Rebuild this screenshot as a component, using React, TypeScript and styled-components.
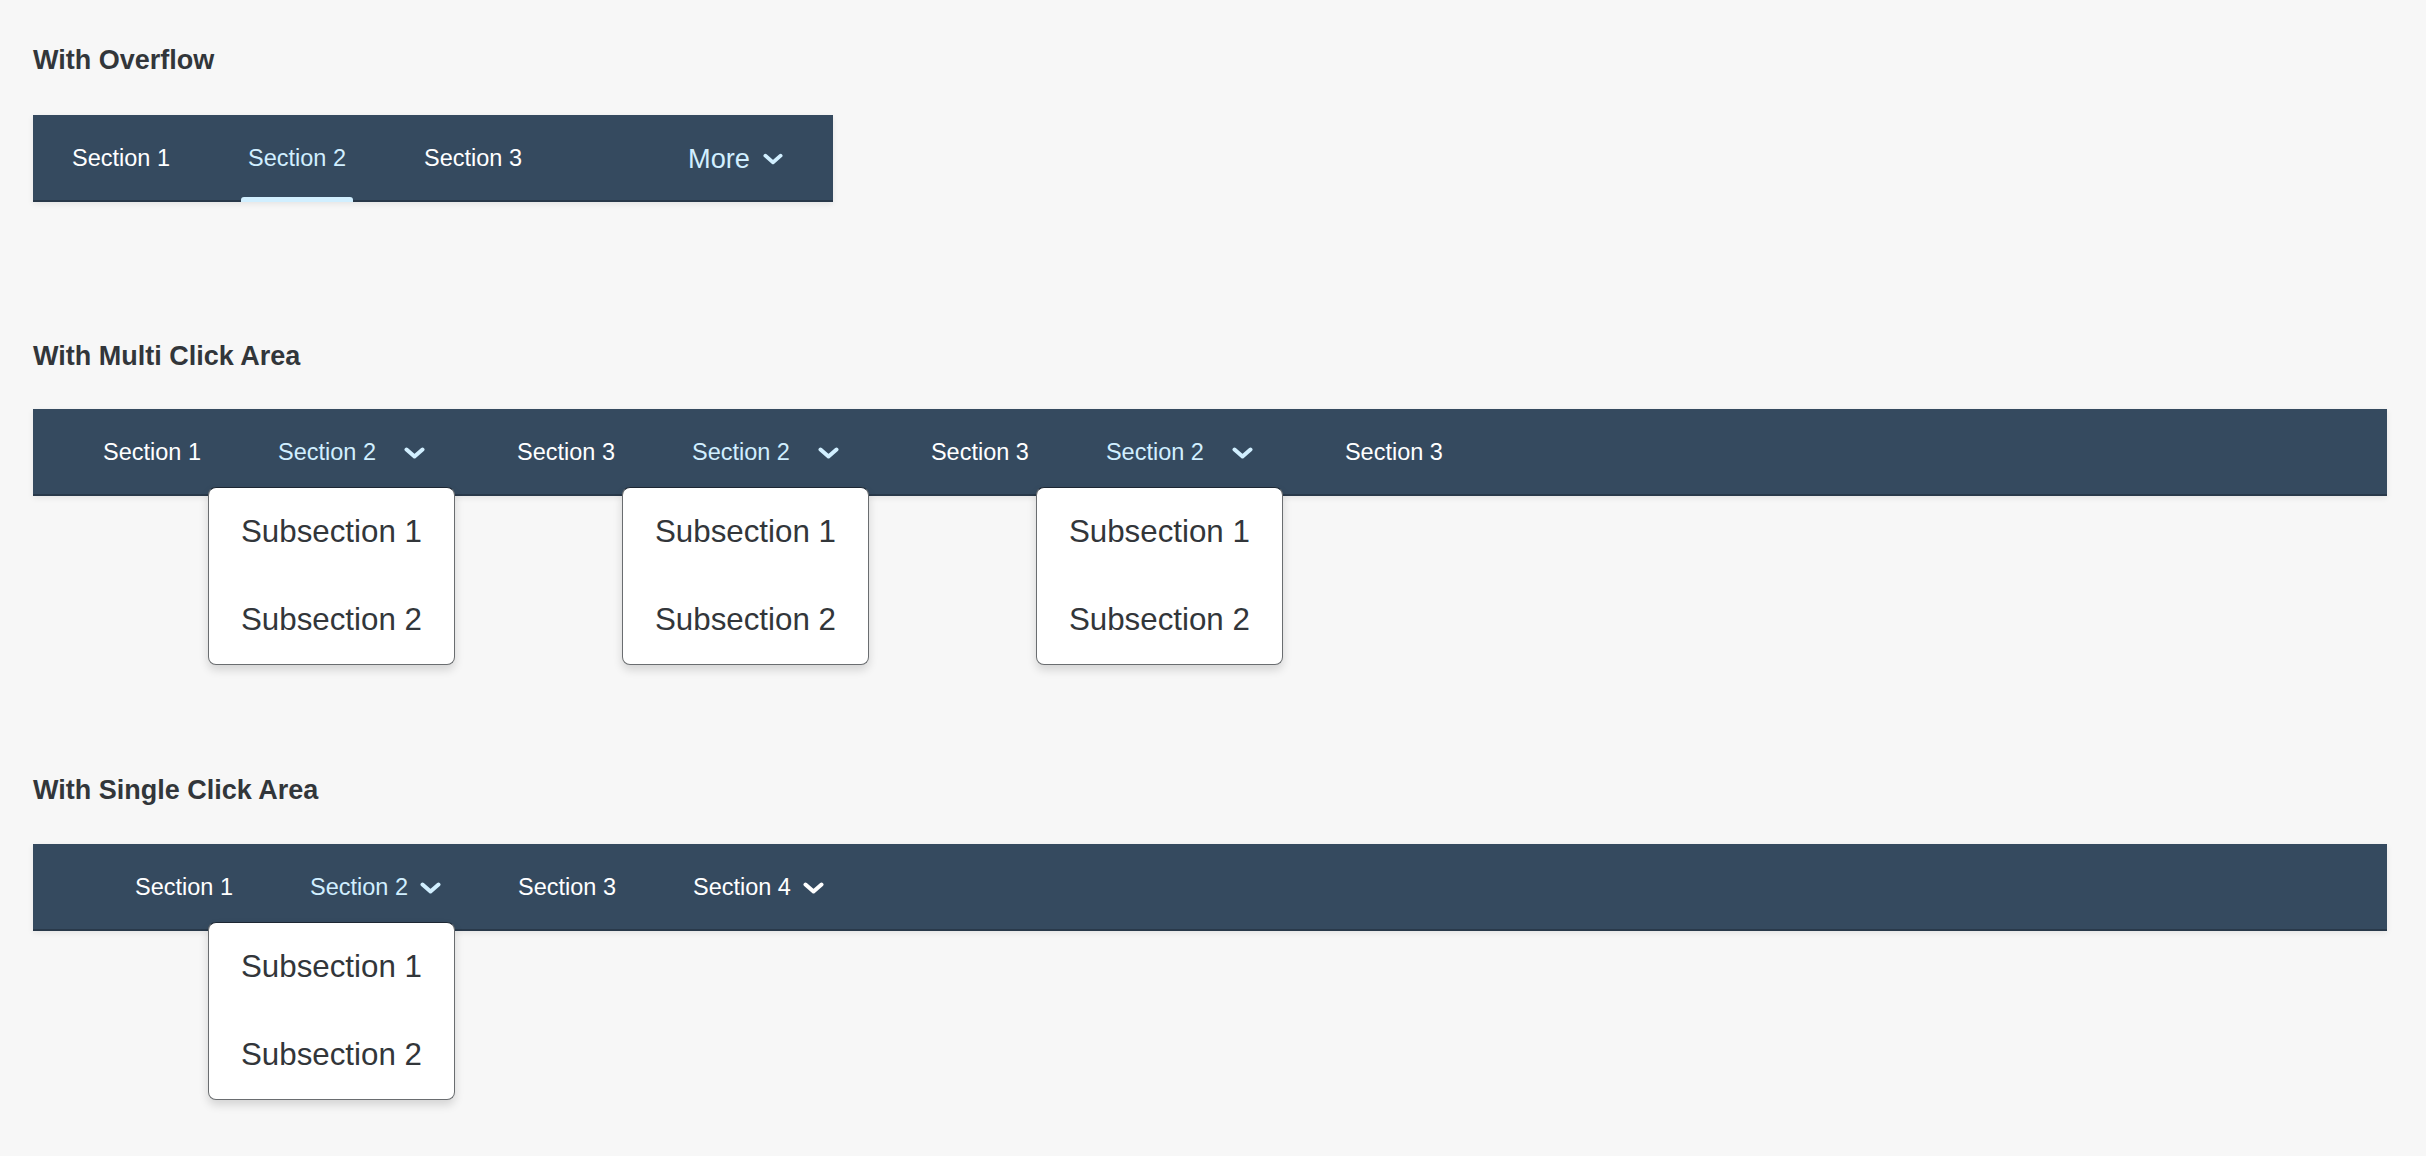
import styled, { createGlobalStyle } from "styled-components";

const GlobalStyle = createGlobalStyle`
  html, body {
    margin: 0;
    padding: 0;
    background: #f7f7f7;
  }

  body {
    font-family: 'Liberation Sans', Arial, sans-serif;
  }
`;

const Page = styled.div`
  min-height: 100vh;
  padding: 40px 39px 0 33px;
  box-sizing: border-box;
  background: #f7f7f7;
`;

const Section = styled.section<{ $top: number }>`
  display: flex;
  flex-direction: column;
  margin-top: ${(p) => p.$top}px;
`;

const Heading = styled.h2<{ $gap: number }>`
  margin: 0 0 ${(p) => p.$gap}px 0;
  height: 40px;
  line-height: 40px;
  font-size: 27px;
  font-weight: 700;
  color: #32363a;
`;

const Bar = styled.nav<{ $width?: number; $padLeft: number; $gap: number }>`
  display: flex;
  align-items: stretch;
  height: 87px;
  width: ${(p) => (p.$width ? `${p.$width}px` : "100%")};
  padding-left: ${(p) => p.$padLeft}px;
  gap: ${(p) => p.$gap}px;
  box-sizing: border-box;
  background: #354a5f;
  box-shadow: inset 0 -2px 0 rgba(0, 0, 0, 0.22), 0 2px 6px rgba(0, 0, 0, 0.08);
`;

const Item = styled.div<{ $active?: boolean; $pad?: number }>`
  position: relative;
  display: flex;
  align-items: center;
  padding: 0 ${(p) => p.$pad ?? 0}px;
  font-size: 23.5px;
  color: ${(p) => (p.$active ? "#d1efff" : "#ffffff")};
  white-space: nowrap;
`;

const Indicator = styled.span`
  position: absolute;
  left: 0;
  right: 0;
  bottom: 0;
  height: 5px;
  border-radius: 3px 3px 0 0;
  background: #d1efff;
`;

const ArrowButton = styled.span<{ $gap: number; $trail: number }>`
  display: flex;
  align-items: center;
  margin-left: ${(p) => p.$gap}px;
  padding-right: ${(p) => p.$trail}px;
`;

const More = styled.div`
  display: flex;
  align-items: center;
  gap: 13px;
  margin-left: auto;
  padding-right: 50px;
  font-size: 27.2px;
  color: #d1efff;
`;

const Menu = styled.div<{ $left: number }>`
  position: absolute;
  top: calc(100% - 9px);
  left: ${(p) => p.$left}px;
  z-index: 2;
  width: 247px;
  box-sizing: border-box;
  background: #ffffff;
  border: 1px solid #6a6d70;
  border-top-color: #1d2733;
  border-radius: 8px;
  box-shadow: 0 5px 10px rgba(0, 0, 0, 0.14);
`;

const MenuItem = styled.div`
  display: flex;
  align-items: center;
  height: 88px;
  padding-left: 32px;
  font-size: 31.3px;
  color: #32363a;
`;

const Chevron = ({ color, width = 21 }: { color: string; width?: number }) => (
  <svg width={width} height={12} viewBox="0 0 21 12" fill="none">
    <polyline
      points="2.5,2.5 10.5,9.5 18.5,2.5"
      stroke={color}
      strokeWidth={4}
      strokeLinecap="round"
      strokeLinejoin="round"
    />
  </svg>
);

const SubMenu = ({ left }: { left: number }) => (
  <Menu $left={left}>
    <MenuItem>Subsection 1</MenuItem>
    <MenuItem>Subsection 2</MenuItem>
  </Menu>
);

const App = () => {
  const multi = ["Section 1", "Section 2", "Section 3", "Section 2", "Section 3", "Section 2", "Section 3"];

  return (
    <>
      <GlobalStyle />
      <Page>
        <Section $top={0}>
          <Heading $gap={35}>With Overflow</Heading>
          <Bar $width={800} $padLeft={32} $gap={64}>
            <Item $pad={7}>Section 1</Item>
            <Item $pad={7} $active>
              Section 2
              <Indicator />
            </Item>
            <Item $pad={7}>Section 3</Item>
            <More>
              More
              <Chevron color="#d1efff" width={20} />
            </More>
          </Bar>
        </Section>

        <Section $top={134}>
          <Heading $gap={33}>With Multi Click Area</Heading>
          <Bar $padLeft={70} $gap={77}>
            {multi.map((label, i) =>
              label === "Section 2" ? (
                <Item key={i} $active>
                  {label}
                  <ArrowButton $gap={28} $trail={15}>
                    <Chevron color="#d1efff" />
                  </ArrowButton>
                  <SubMenu left={-70} />
                </Item>
              ) : (
                <Item key={i}>{label}</Item>
              )
            )}
          </Bar>
        </Section>

        <Section $top={274}>
          <Heading $gap={34}>With Single Click Area</Heading>
          <Bar $padLeft={102} $gap={77}>
            <Item>Section 1</Item>
            <Item $active>
              Section 2
              <ArrowButton $gap={12} $trail={0}>
                <Chevron color="#d1efff" />
              </ArrowButton>
              <SubMenu left={-102} />
            </Item>
            <Item>Section 3</Item>
            <Item>
              Section 4
              <ArrowButton $gap={12} $trail={0}>
                <Chevron color="#ffffff" />
              </ArrowButton>
            </Item>
          </Bar>
        </Section>
      </Page>
    </>
  );
};

export default App;
